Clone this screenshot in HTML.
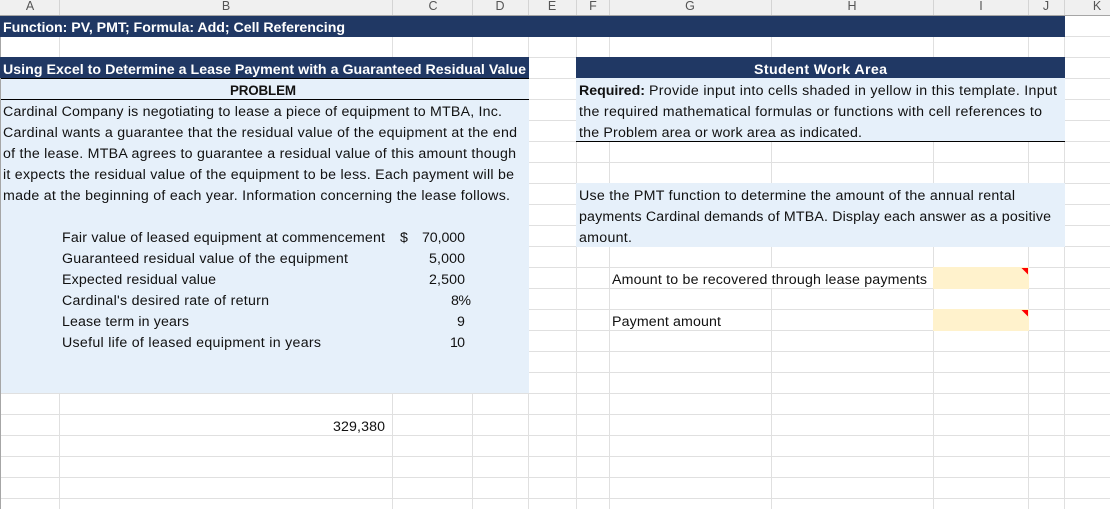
<!DOCTYPE html>
<html>
<head>
<meta charset="utf-8">
<style>
html,body{margin:0;padding:0;background:#fff;width:1110px;height:509px;overflow:hidden}
svg{display:block}
text{font-family:"Liberation Sans",sans-serif;font-size:14.2px;fill:#111}
.b{font-weight:bold}
.p{font-weight:bold;font-size:13.4px}
.w{font-weight:bold;fill:#fff}
.h{font-size:12.5px;fill:#555;text-anchor:middle}
</style>
</head>
<body>
<svg width="1110" height="509" viewBox="0 0 1110 509" xmlns="http://www.w3.org/2000/svg">
<rect width="1110" height="509" fill="#fff"/>
<g fill="#e0e0e0" shape-rendering="crispEdges">
<rect x="0" y="36" width="1110" height="1"/><rect x="0" y="57" width="1110" height="1"/><rect x="0" y="78" width="1110" height="1"/><rect x="0" y="99" width="1110" height="1"/><rect x="0" y="120" width="1110" height="1"/><rect x="0" y="141" width="1110" height="1"/><rect x="0" y="162" width="1110" height="1"/><rect x="0" y="183" width="1110" height="1"/><rect x="0" y="204" width="1110" height="1"/><rect x="0" y="225" width="1110" height="1"/><rect x="0" y="246" width="1110" height="1"/><rect x="0" y="267" width="1110" height="1"/><rect x="0" y="288" width="1110" height="1"/><rect x="0" y="309" width="1110" height="1"/><rect x="0" y="330" width="1110" height="1"/><rect x="0" y="351" width="1110" height="1"/><rect x="0" y="372" width="1110" height="1"/><rect x="0" y="393" width="1110" height="1"/><rect x="0" y="414" width="1110" height="1"/><rect x="0" y="435" width="1110" height="1"/><rect x="0" y="456" width="1110" height="1"/><rect x="0" y="477" width="1110" height="1"/><rect x="0" y="498" width="1110" height="1"/>
<rect x="59" y="15" width="1" height="494"/><rect x="392" y="15" width="1" height="494"/><rect x="472" y="15" width="1" height="494"/><rect x="528" y="15" width="1" height="494"/><rect x="576" y="15" width="1" height="494"/><rect x="609" y="15" width="1" height="494"/><rect x="771" y="15" width="1" height="494"/><rect x="933" y="15" width="1" height="494"/><rect x="1028" y="15" width="1" height="494"/><rect x="1064" y="15" width="1" height="494"/>
</g>
<g shape-rendering="crispEdges">
<rect x="771" y="268" width="1" height="20" fill="#fff"/>
<rect x="0" y="0" width="1110" height="15" fill="#f0f0f0"/>
<rect x="0" y="15" width="1110" height="1" fill="#a6a6a6"/>
<g fill="#d4d4d4">
<rect x="59" y="0" width="1" height="15"/><rect x="392" y="0" width="1" height="15"/><rect x="472" y="0" width="1" height="15"/><rect x="528" y="0" width="1" height="15"/><rect x="576" y="0" width="1" height="15"/><rect x="609" y="0" width="1" height="15"/><rect x="771" y="0" width="1" height="15"/><rect x="933" y="0" width="1" height="15"/><rect x="1028" y="0" width="1" height="15"/><rect x="1064" y="0" width="1" height="15"/>
</g>
<rect x="1" y="78" width="528" height="315" fill="#e6f0fa"/>
<rect x="576" y="78" width="489" height="63" fill="#e6f0fa"/>
<rect x="576" y="183" width="489" height="64" fill="#e6f0fa"/>
<rect x="0" y="16" width="1065" height="21" fill="#203864"/>
<rect x="0" y="57" width="529" height="21" fill="#203864"/>
<rect x="576" y="57" width="489" height="21" fill="#203864"/>
<rect x="0" y="78" width="529" height="1" fill="#000"/>
<rect x="0" y="99" width="529" height="1" fill="#000"/>
<rect x="576" y="141" width="489" height="1" fill="#000"/>
<rect x="933" y="267" width="96" height="22" fill="#fff2cc"/>
<rect x="933" y="309" width="96" height="22" fill="#fff2cc"/>
<rect x="0" y="16" width="1" height="493" fill="#a6a6a6"/>
<rect x="0" y="16" width="1" height="21" fill="#203864"/>
<rect x="0" y="57" width="1" height="21" fill="#203864"/>
</g>
<polygon points="1021.5,268 1028,268 1028,274.5" fill="#ff0000"/>
<polygon points="1021.5,310 1028,310 1028,316.5" fill="#ff0000"/>

<text class="h" x="30" y="10">A</text>
<text class="h" x="226" y="10">B</text>
<text class="h" x="433" y="10">C</text>
<text class="h" x="500" y="10">D</text>
<text class="h" x="552" y="10">E</text>
<text class="h" x="593" y="10">F</text>
<text class="h" x="690" y="10">G</text>
<text class="h" x="852" y="10">H</text>
<text class="h" x="981" y="10">I</text>
<text class="h" x="1046" y="10">J</text>
<text class="h" x="1097" y="10">K</text>

<text class="w" x="3" y="32" textLength="342">Function: PV, PMT; Formula: Add; Cell Referencing</text>
<text class="w" x="3" y="74" textLength="523">Using Excel to Determine a Lease Payment with a Guaranteed Residual Value</text>
<text class="p" x="230" y="95" textLength="66">PROBLEM</text>
<text x="3" y="116" textLength="499">Cardinal Company is negotiating to lease a piece of equipment to MTBA, Inc.</text>
<text x="3" y="137" textLength="514">Cardinal wants a guarantee that the residual value of the equipment at the end</text>
<text x="3" y="158" textLength="513">of the lease. MTBA agrees to guarantee a residual value of this amount though</text>
<text x="3" y="179" textLength="511">it expects the residual value of the equipment to be less. Each payment will be</text>
<text x="3" y="200" textLength="507">made at the beginning of each year. Information concerning the lease follows.</text>

<text x="62" y="242" textLength="323">Fair value of leased equipment at commencement</text>
<text x="62" y="263" textLength="286">Guaranteed residual value of the equipment</text>
<text x="62" y="284" textLength="154">Expected residual value</text>
<text x="62" y="305" textLength="207">Cardinal's desired rate of return</text>
<text x="62" y="326" textLength="127">Lease term in years</text>
<text x="62" y="347" textLength="259">Useful life of leased equipment in years</text>

<text x="400" y="242" textLength="8">$</text>
<text x="422" y="242" textLength="43">70,000</text>
<text x="429" y="263" textLength="36">5,000</text>
<text x="429" y="284" textLength="36">2,500</text>
<text x="451" y="305" textLength="20">8%</text>
<text x="457" y="326" textLength="8">9</text>
<text x="450" y="347" textLength="15">10</text>
<text x="333" y="431" textLength="52">329,380</text>

<text class="w" x="754" y="74" textLength="133">Student Work Area</text>
<text class="b" x="579" y="95" textLength="66">Required:</text>
<text x="649" y="95" textLength="408">Provide input into cells shaded in yellow in this template. Input</text>
<text x="579" y="116" textLength="463">the required mathematical formulas or functions with cell references to</text>
<text x="579" y="137" textLength="283">the Problem area or work area as indicated.</text>

<text x="579" y="200" textLength="436">Use the PMT function to determine the amount of the annual rental</text>
<text x="579" y="221" textLength="472">payments Cardinal demands of MTBA. Display each answer as a positive</text>
<text x="579" y="242" textLength="53">amount.</text>

<text x="612" y="284" textLength="315">Amount to be recovered through lease payments</text>
<text x="612" y="326" textLength="109">Payment amount</text>
</svg>
</body>
</html>
